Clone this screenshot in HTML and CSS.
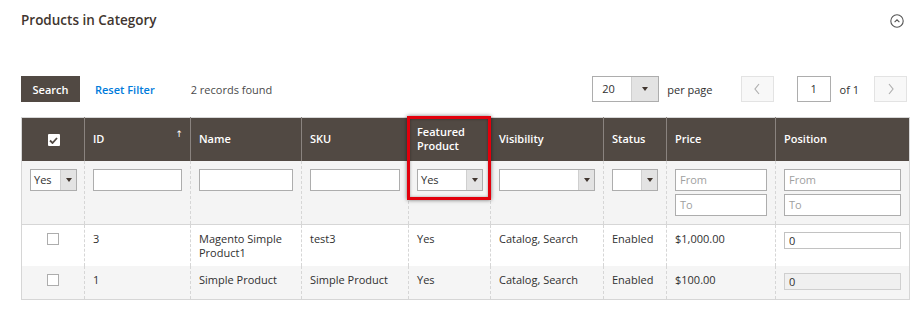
FILE: index.html
```html
<!DOCTYPE html>
<html>
<head>
<meta charset="utf-8">
<link rel="stylesheet" href="styles.css">
</head>
<body>
<div class="page">
  <div class="title-row">
    <h2 class="title">Products in Category</h2>
    <svg class="collapse" width="14" height="14" viewBox="0 0 14 14"><circle cx="7" cy="7" r="6.2" fill="none" stroke="#555" stroke-width="1.1"/><path d="M4.6 8.2 L7 5.8 L9.4 8.2" fill="none" stroke="#555" stroke-width="1.1"/></svg>
  </div>
  <div class="toolbar">
    <button class="btn-search">Search</button>
    <a class="reset">Reset Filter</a>
    <span class="records">2 records found</span>
    <div class="spacer"></div>
    <div class="sel perpage"><span class="sel-val">20</span><span class="sel-arrow"><i></i></span></div>
    <span class="perpage-label">per page</span>
    <div class="pbtn prev"><svg width="8" height="12" viewBox="0 0 8 12"><path d="M6 1 L2 6 L6 11" fill="none" stroke="#b0b0b0" stroke-width="1.2"/></svg></div>
    <div class="pageinput">1</div>
    <span class="of">of 1</span>
    <div class="pbtn next"><svg width="8" height="12" viewBox="0 0 8 12"><path d="M2 1 L6 6 L2 11" fill="none" stroke="#b0b0b0" stroke-width="1.2"/></svg></div>
  </div>
  <table class="grid">
    <colgroup>
      <col style="width:63px"><col style="width:106px"><col style="width:111px"><col style="width:107px"><col style="width:82px"><col style="width:113px"><col style="width:63px"><col style="width:109px"><col style="width:134px">
    </colgroup>
    <thead>
      <tr class="head">
        <th class="c-check"><span class="hcheck"><svg width="9" height="7" viewBox="0 0 9 7"><path d="M1 3.5 L3.5 6 L8 1" fill="none" stroke="#514943" stroke-width="1.8"/></svg></span></th>
        <th class="sorted">ID<span class="sort">↑</span></th>
        <th>Name</th>
        <th>SKU</th>
        <th class="featured">Featured<br>Product<div class="highlight"></div></th>
        <th>Visibility</th>
        <th>Status</th>
        <th>Price</th>
        <th>Position</th>
      </tr>
      <tr class="filters">
        <td class="c-check"><div class="sel s-yes"><span class="sel-val">Yes</span><span class="sel-arrow"><i></i></span></div></td>
        <td><div class="inp"></div></td>
        <td><div class="inp"></div></td>
        <td><div class="inp"></div></td>
        <td><div class="sel s-feat"><span class="sel-val">Yes</span><span class="sel-arrow"><i></i></span></div></td>
        <td><div class="sel s-vis"><span class="sel-val"></span><span class="sel-arrow"><i></i></span></div></td>
        <td><div class="sel s-status"><span class="sel-val"></span><span class="sel-arrow"><i></i></span></div></td>
        <td><div class="range"><div class="inp ph">From</div><div class="inp ph">To</div></div></td>
        <td><div class="range"><div class="inp ph">From</div><div class="inp ph">To</div></div></td>
      </tr>
    </thead>
    <tbody>
      <tr class="row odd">
        <td class="c-check"><span class="cb"></span></td>
        <td>3</td>
        <td>Magento Simple<br>Product1</td>
        <td>test3</td>
        <td>Yes</td>
        <td>Catalog, Search</td>
        <td>Enabled</td>
        <td>$1,000.00</td>
        <td><div class="pos">0</div></td>
      </tr>
      <tr class="row even">
        <td class="c-check"><span class="cb"></span></td>
        <td>1</td>
        <td>Simple Product</td>
        <td>Simple Product</td>
        <td>Yes</td>
        <td>Catalog, Search</td>
        <td>Enabled</td>
        <td>$100.00</td>
        <td><div class="pos disabled">0</div></td>
      </tr>
    </tbody>
  </table>
</div>
</body>
</html>
```
FILE: styles.css
```css
* { box-sizing: border-box; }
html, body { margin: 0; background: #fff; }
body { font-family: "Open Sans", "DejaVu Sans", sans-serif; color: #303030; font-size: 11px; }
.page { padding: 0 14px 0 21px; }
.title-row { display: flex; align-items: center; justify-content: space-between; height: 40px; padding-right: 3px; }
.title { margin: 0; font-size: 13.5px; font-weight: 600; color: #41362f; }
.collapse { display: block; margin-top: 2px; }
.toolbar { display: flex; align-items: center; height: 26px; margin-top: 36px; }
.btn-search { height: 26px; width: 59px; border: 0; background: #514943; color: #fff; font-family: inherit; font-size: 11px; font-weight: 600; padding: 0; }
.reset { color: #007bdb; font-weight: 600; margin-left: 15px; }
.records { margin-left: 36px; color: #4a4a4a; }
.spacer { flex: 1; }
.sel { display: flex; border: 1px solid #adadad; background: #fff; height: 22px; }
.sel-val { flex: 1; padding-left: 3px; line-height: 20px; color: #303030; }
.sel-arrow { width: 16px; background: #e3e3e3; border-left: 1px solid #cfcfcf; display: flex; align-items: center; justify-content: center; }
.sel-arrow i { width: 0; height: 0; border-left: 3px solid transparent; border-right: 3px solid transparent; border-top: 4px solid #41362f; }
.perpage { width: 67px; height: 26px; }
.perpage .sel-val { padding-left: 9px; line-height: 24px; }
.perpage .sel-arrow { width: 27px; }
.perpage-label { margin-left: 8px; }
.pbtn { width: 33px; height: 26px; border: 1px solid #e3e3e3; background: #f8f8f8; display: flex; align-items: center; justify-content: center; }
.prev { margin-left: 28px; }
.pageinput { margin-left: 23px; width: 34px; height: 26px; border: 1px solid #adadad; text-align: center; line-height: 24px; }
.of { margin-left: 9px; margin-right: 15px; }
.grid { margin-top: 15px; border-collapse: collapse; table-layout: fixed; width: 888px; border: 1px solid #d6d6d6; }
.head th { background: #514943; color: #fff; font-weight: 600; text-align: left; padding: 0 8px; height: 43px; line-height: 14px; border-left: 1px solid #8a837f; vertical-align: middle; font-size: 11px; }
.head th:first-child { border-left: 0; }
.head th.c-check { text-align: center; }
.hcheck { display: inline-flex; width: 12px; height: 12px; background: #fff; border-radius: 1px; align-items: center; justify-content: center; vertical-align: middle; margin-left: 1px; }
.sorted { position: relative; }
.sort { position: absolute; right: 7px; top: 9px; font-size: 9px; font-weight: 400; color: #fff; }
.featured { position: relative; }
.highlight { position: absolute; left: -2px; top: -2px; width: 84px; height: 84px; border: 3px solid #e2000c; box-shadow: 0 0 4px rgba(0,0,0,0.55), inset 0 0 3px rgba(0,0,0,0.35); pointer-events: none; z-index: 2; }
.filters td { background: #f4f4f4; vertical-align: top; padding: 8px 8px 8px 8px; height: 64px; border-left: 1px dashed #d6d6d6; border-bottom: 1px solid #d6d6d6; }
.filters td:first-child { border-left: 0; padding-left: 8px; }
.inp { height: 22px; border: 1px solid #adadad; background: #fff; line-height: 20px; padding-left: 4px; color: #303030; }
.inp.ph { color: #a0a0a0; }
.range { display: flex; flex-direction: column; gap: 3px; }
.s-yes { width: 47px; }
.s-feat { width: 66px; }
.s-vis { width: 96px; }
.s-status { width: 46px; }
.row td { vertical-align: top; padding: 7px 8px 6px 8px; line-height: 14px; border-left: 1px dashed #d6d6d6; color: #303030; }
.row td:first-child { border-left: 0; }
.row.odd td { background: #fff; height: 41px; }
.row.even td { background: #f5f5f5; height: 33px; }
.row td.c-check { text-align: center; padding-top: 8px; }
.cb { display: inline-block; width: 12px; height: 12px; border: 1px solid #adadad; background: #fff; }
.pos { height: 17px; border: 1px solid #c2c2c2; background: #fff; line-height: 15px; padding-left: 4px; margin-top: 0; font-size: 11px; }
.pos.disabled { background: #f0f0f0; border-color: #cfcfcf; }
```
